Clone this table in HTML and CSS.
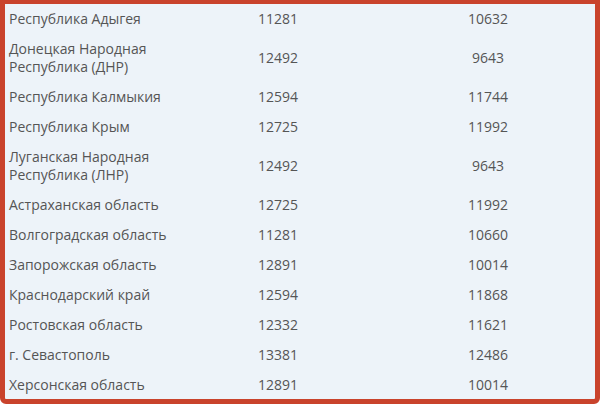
FILE: index.html
```html
<!DOCTYPE html>
<html lang="ru">
<head>
<meta charset="utf-8">
<link rel="stylesheet" href="styles.css">
</head>
<body>
<div class="frame">
  <table class="tbl">
    <colgroup><col class="c1"><col class="c2"><col class="c3"></colgroup>
    <tbody>
      <tr><td>Республика Адыгея</td><td>11281</td><td>10632</td></tr>
      <tr><td>Донецкая Народная Республика (ДНР)</td><td>12492</td><td>9643</td></tr>
      <tr><td>Республика Калмыкия</td><td>12594</td><td>11744</td></tr>
      <tr><td>Республика Крым</td><td>12725</td><td>11992</td></tr>
      <tr><td>Луганская Народная Республика (ЛНР)</td><td>12492</td><td>9643</td></tr>
      <tr><td>Астраханская область</td><td>12725</td><td>11992</td></tr>
      <tr><td>Волгоградская область</td><td>11281</td><td>10660</td></tr>
      <tr><td>Запорожская область</td><td>12891</td><td>10014</td></tr>
      <tr><td>Краснодарский край</td><td>12594</td><td>11868</td></tr>
      <tr><td>Ростовская область</td><td>12332</td><td>11621</td></tr>
      <tr><td>г. Севастополь</td><td>13381</td><td>12486</td></tr>
      <tr><td>Херсонская область</td><td>12891</td><td>10014</td></tr>
    </tbody>
  </table>
</div>
</body>
</html>
```

FILE: styles.css
```css
html, body {
  margin: 0;
  padding: 0;
  background: #ffffff;
}
.frame {
  width: 600px;
  height: 404px;
  box-sizing: border-box;
  border: 5px solid #c9432c;
  border-top-width: 4px;
  border-radius: 0 0 6px 6px;
  background: #edf3f9;
  overflow: hidden;
}
.tbl {
  width: 100%;
  border-collapse: collapse;
  table-layout: fixed;
  font-family: "Open Sans", "DejaVu Sans", sans-serif;
  font-size: 14px;
  color: #555555;
}
.c1 { width: 170px; }
.c2 { width: 206px; }
.tbl td {
  padding: 6px 4px;
  line-height: 18px;
  vertical-align: middle;
  text-align: center;
}
.tbl td:first-child {
  text-align: left;
  padding-left: 4px;
}
```
